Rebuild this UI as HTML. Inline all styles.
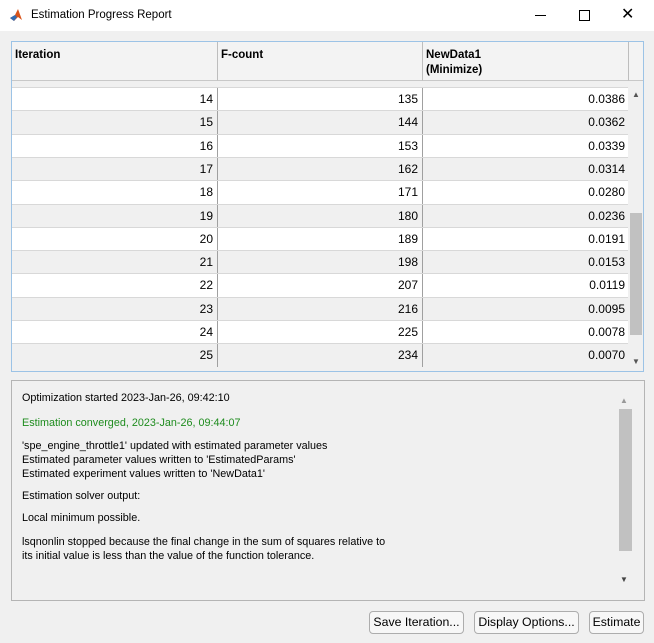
<!DOCTYPE html>
<html><head><style>
body{margin:0;width:654px;height:643px;background:#f0f0f0;font-family:"Liberation Sans",Arial,sans-serif;font-size:12px;color:#000;position:relative;overflow:hidden}
.abs{position:absolute}
.title{left:0;top:0;width:654px;height:31px;background:#fff}
.tbl{left:11px;top:41px;width:631px;height:329px;border:1px solid #9cc3e6;background:#f0f0f0;overflow:hidden}
.hd{top:0;height:39px;background:#f3f3f3;border-right:1px solid #bdbdbd;border-bottom:1px solid #c8c8c8;font-weight:bold;font-size:11.5px;padding:6px 3px;box-sizing:border-box;line-height:15px}
.row{left:0;width:616px;height:23px}
.cell{top:0;height:23px;border-right:1px solid #a0a0a0;box-sizing:border-box;text-align:right;padding-right:4px;line-height:22px;font-size:12px}
.out{left:11px;top:380px;width:632px;height:219px;border:1px solid #b4b4b4}
.out div{position:absolute;left:10px;font-size:10.8px;white-space:nowrap}
.btn{top:611px;height:23px;border:1px solid #adadad;border-radius:4px;background:#f7f7f7;box-sizing:border-box;text-align:center;line-height:21px;font-size:12.3px}
</style></head><body>
<div class="abs title">
<svg class="abs" style="left:9px;top:8px" width="14" height="14"><path d="M1 10 L6 7 L9 1 L13 12 L9 9 L5 13Z" fill="#d95319"/><path d="M1 10 L6 7 L8 9 L5 13Z" fill="#2f6db5"/></svg>
<div class="abs" style="left:31px;top:9px;font-size:11.5px">Estimation Progress Report</div>
<div class="abs" style="left:535px;top:15px;width:11px;height:1px;background:#000"></div>
<div class="abs" style="left:579px;top:10px;width:9px;height:9px;border:1px solid #000"></div>
<div class="abs" style="left:621px;top:4px;font-size:16px">✕</div>
</div>
<div class="abs tbl">
<div class="abs hd" style="left:0;width:206px">Iteration</div>
<div class="abs hd" style="left:206px;width:205px">F-count</div>
<div class="abs hd" style="left:411px;width:206px">NewData1<br>(Minimize)</div>
<div class="abs hd" style="left:617px;width:14px;border-right:0"></div>
<div id="rows"></div>
<div class="abs" style="left:620px;top:48px;font-size:8px;color:#555">▲</div>
<div class="abs" style="left:620px;top:315px;font-size:8px;color:#555">▼</div>
<div class="abs" style="left:618px;top:171px;width:12px;height:122px;background:#c1c1c1"></div>
</div>
<div class="abs out">
<div style="top:11px">Optimization started 2023-Jan-26, 09:42:10</div>
<div style="top:36px;color:#1e8c1e">Estimation converged, 2023-Jan-26, 09:44:07</div>
<div style="top:59px">'spe_engine_throttle1' updated with estimated parameter values</div>
<div style="top:73px">Estimated parameter values written to 'EstimatedParams'</div>
<div style="top:87px">Estimated experiment values written to 'NewData1'</div>
<div style="top:109px">Estimation solver output:</div>
<div style="top:131px">Local minimum possible.</div>
<div style="top:155px">lsqnonlin stopped because the final change in the sum of squares relative to</div>
<div style="top:169px">its initial value is less than the value of the function tolerance.</div>
<div style="left:608px;top:15px;font-size:8px;color:#999">▲</div>
<div style="left:607px;top:28px;width:13px;height:142px;background:#c1c1c1"></div>
<div style="left:608px;top:194px;font-size:8px;color:#444">▼</div>
</div>
<div class="abs btn" style="left:369px;width:95px">Save Iteration...</div>
<div class="abs btn" style="left:474px;width:105px">Display Options...</div>
<div class="abs btn" style="left:589px;width:55px">Estimate</div>
<script>
var d=[[14,135,'0.0386'],[15,144,'0.0362'],[16,153,'0.0339'],[17,162,'0.0314'],[18,171,'0.0280'],[19,180,'0.0236'],[20,189,'0.0191'],[21,198,'0.0153'],[22,207,'0.0119'],[23,216,'0.0095'],[24,225,'0.0078'],[25,234,'0.0070']];
var h='';d.forEach(function(r,i){var t=45+i*23.3;var bg=i%2?'#f0f0f0':'#fff';
h+='<div class="abs row" style="top:'+t+'px;background:'+bg+';border-top:1px solid #d8d8d8"><div class="abs cell" style="left:0;width:206px">'+r[0]+'</div><div class="abs cell" style="left:206px;width:205px">'+r[1]+'</div><div class="abs cell" style="left:411px;width:206px;border-right:0">'+r[2]+'</div></div>';});
document.getElementById('rows').innerHTML=h;
</script>
</body></html>
